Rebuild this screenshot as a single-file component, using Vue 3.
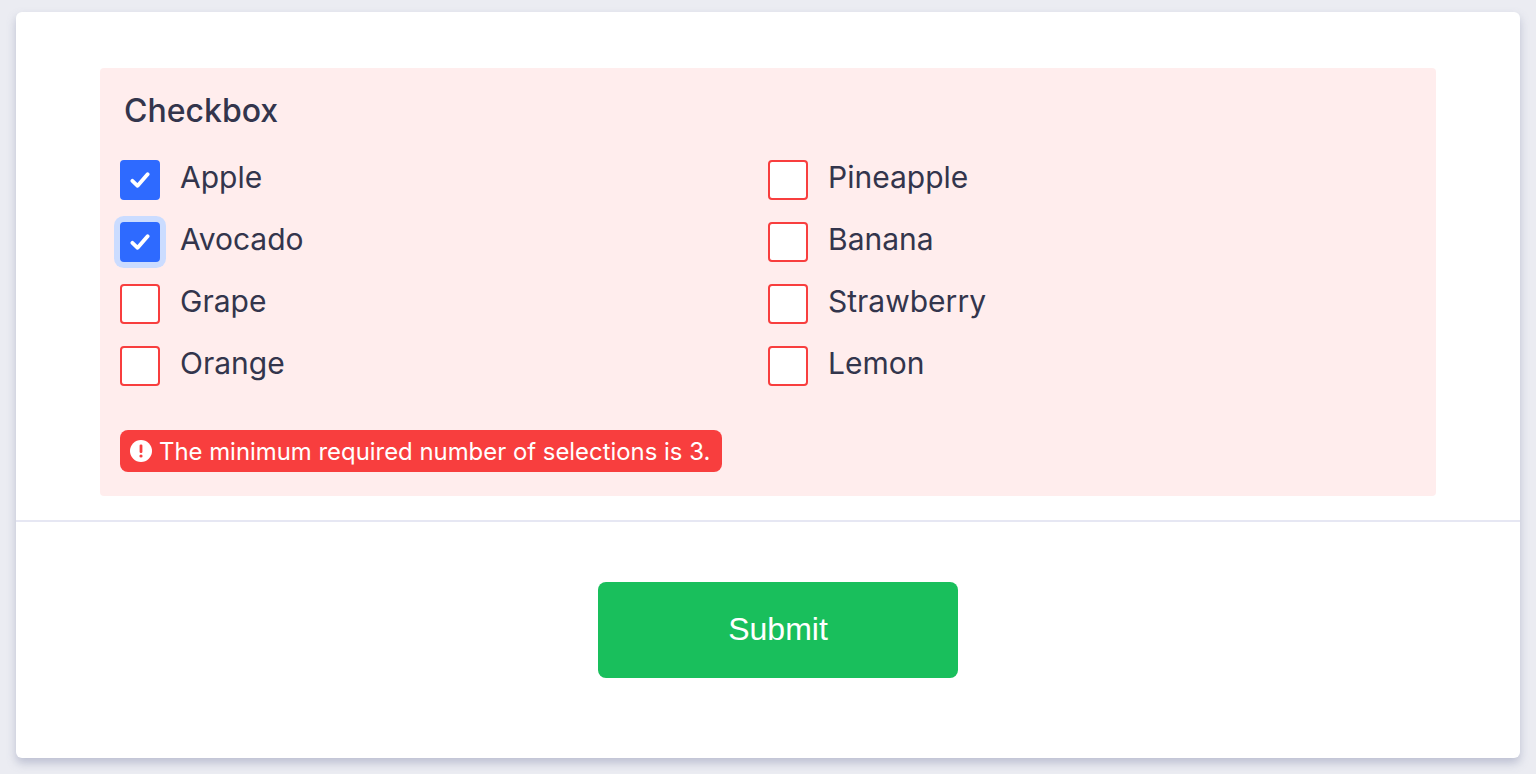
<template>
  <div class="page">
    <form class="card" @submit.prevent>
      <div class="card-body">
        <div class="field">
          <div class="field-title">Checkbox</div>
          <div class="options">
            <label v-for="(item, i) in options" :key="item.label" class="option">
              <span class="box" :class="{ checked: item.checked, focused: i === 2 }">
                <svg v-if="item.checked" viewBox="0 0 20 20" width="20" height="20">
                  <path d="M2.4 10.8 L7.6 15.8 L17.6 4.2" fill="none" stroke="#fff" stroke-width="3.8" stroke-linecap="round" stroke-linejoin="round" />
                </svg>
              </span>
              <span class="option-label">{{ item.label }}</span>
            </label>
          </div>
          <div class="error">
            <svg viewBox="0 0 22 22" width="22" height="22" class="error-icon">
              <circle cx="11" cy="11" r="11" fill="#fff" />
              <rect x="9.6" y="4.6" width="2.8" height="8.4" rx="1.2" fill="#f83e3e" />
              <circle cx="11" cy="16" r="1.6" fill="#f83e3e" />
            </svg>
            <span>The minimum required number of selections is 3.</span>
          </div>
        </div>
      </div>
      <div class="card-footer">
        <button type="submit" class="submit">Submit</button>
      </div>
    </form>
  </div>
</template>

<script setup>
// two columns, filled row by row
const options = [
  { label: 'Apple', checked: true },
  { label: 'Pineapple', checked: false },
  { label: 'Avocado', checked: true },
  { label: 'Banana', checked: false },
  { label: 'Grape', checked: false },
  { label: 'Strawberry', checked: false },
  { label: 'Orange', checked: false },
  { label: 'Lemon', checked: false }
]
</script>

<style>
html,
body {
  margin: 0;
  background: #ebecf2;
}
</style>

<style scoped>
.page {
  height: 774px;
  box-sizing: border-box;
  padding: 12px 16px 16px;
  font-family: Inter, "Liberation Sans", sans-serif;
  overflow: hidden;
}

.card {
  display: block;
  height: 746px;
  background: #fff;
  border-radius: 6px;
  box-shadow: 0 5px 10px rgba(100, 110, 150, 0.35);
}

.card-body {
  padding: 56px 84px 24px;
  border-bottom: 2px solid #e6e7f3;
}

.field {
  height: 428px;
  box-sizing: border-box;
  padding: 20px 20px 0;
  background: #ffeded;
  border-radius: 4px;
}

.field-title {
  padding-left: 4px;
  font-size: 32px;
  line-height: 46px;
  font-weight: 500;
  color: #33354c;
}

.options {
  display: grid;
  grid-template-columns: 648px 1fr;
  row-gap: 22px;
  margin-top: 26px;
}

.option {
  display: flex;
  align-items: center;
  height: 40px;
}

.box {
  display: flex;
  align-items: center;
  justify-content: center;
  width: 40px;
  height: 40px;
  box-sizing: border-box;
  background: #fff;
  border: 2px solid #f83e3e;
  border-radius: 4px;
}

.box.checked {
  background: #2e6aff;
  border-color: #2e6aff;
}

.box.focused {
  box-shadow: 0 0 0 6px #cbdcff;
}

.option-label {
  margin-left: 20px;
  font-size: 30px;
  line-height: 36px;
  color: #33354c;
  position: relative;
  top: -3px;
}

.error {
  display: inline-flex;
  align-items: center;
  height: 42px;
  margin-top: 44px;
  padding: 0 12px 0 10px;
  background: #f83e3e;
  border-radius: 8px;
  color: #fff;
  font-size: 23.9px;
  white-space: nowrap;
}

.error-icon {
  margin-right: 7px;
}

.card-footer {
  display: flex;
  justify-content: center;
  padding-top: 60px;
}

.submit {
  width: 360px;
  height: 96px;
  margin-left: 20px;
  padding: 0 0 2px;
  background: #19bf5c;
  border: none;
  border-radius: 8px;
  color: #fff;
  font-family: "Liberation Sans", Arial, sans-serif;
  font-size: 32px;
}
</style>
